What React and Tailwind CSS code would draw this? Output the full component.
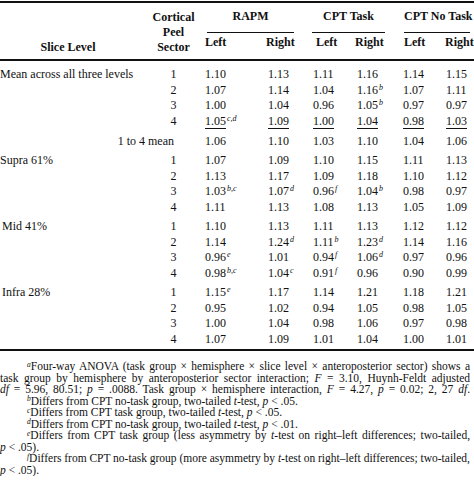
const COLS = "grid grid-cols-[146px_59px_63px_45px_44px_46px_43px_28px]";

const groups = [
  {
    label: "Mean across all three levels",
    rows: [
      ["1", "1.10", "1.13", "1.11", "1.16", "1.14", "1.15"],
      ["2", "1.07", "1.14", "1.04", "1.16^b", "1.07", "1.11"],
      ["3", "1.00", "1.04", "0.96", "1.05^b", "0.97", "0.97"],
      ["4", "1.05^c,d", "1.09", "1.00", "1.04", "0.98", "1.03"],
    ],
    underlineLast: true,
  },
  {
    label: "Supra 61%",
    rows: [
      ["1", "1.07", "1.09", "1.10", "1.15", "1.11", "1.13"],
      ["2", "1.13", "1.17", "1.09", "1.18", "1.10", "1.12"],
      ["3", "1.03^b,c", "1.07^d", "0.96^f", "1.04^b", "0.98", "0.97"],
      ["4", "1.11", "1.13", "1.08", "1.13", "1.05", "1.09"],
    ],
  },
  {
    label: "Mid 41%",
    rows: [
      ["1", "1.10", "1.13", "1.11", "1.13", "1.12", "1.12"],
      ["2", "1.14", "1.24^d", "1.11^b", "1.23^d", "1.14", "1.16"],
      ["3", "0.96^e", "1.01", "0.94^f", "1.06^d", "0.97", "0.96"],
      ["4", "0.98^b,c", "1.04^c", "0.91^f", "0.96", "0.90", "0.99"],
    ],
  },
  {
    label: "Infra 28%",
    rows: [
      ["1", "1.15^e", "1.17", "1.14", "1.21", "1.18", "1.21"],
      ["2", "0.95", "1.02", "0.94", "1.05", "0.98", "1.05"],
      ["3", "1.00", "1.04", "0.98", "1.06", "0.97", "0.98"],
      ["4", "1.07", "1.09", "1.01", "1.04", "1.00", "1.01"],
    ],
  },
];

const Cell = ({ value, underline }) => {
  const [num, sup] = value.split("^");
  return (
    <div className="whitespace-nowrap">
      <span
        className={
          underline
            ? "inline-block leading-[12px] pb-[1.5px] border-b-[1.5px] border-[#111]"
            : ""
        }
      >
        {num}
      </span>
      {sup && <sup className="text-[8px] italic ml-[1px]">{sup}</sup>}
    </div>
  );
};

const Row = ({ label, cells, underline, labelClass = "" }) => (
  <div className={`${COLS} h-[15.5px] leading-[15.5px]`}>
    <div className={`whitespace-nowrap ${labelClass}`}>{label}</div>
    <div className="text-center pr-[4px]">{cells[0]}</div>
    {cells.slice(1).map((v, i) => (
      <Cell key={i} value={v} underline={underline} />
    ))}
  </div>
);

const Sup = ({ children }) => (
  <sup className="text-[7.5px] italic">{children}</sup>
);

// justified footnote line (one line only)
const J = "text-justify [text-align-last:justify] [word-spacing:-0.5px]";

const App = () => {
  return (
    <div className="w-[474px] bg-white text-[#111] font-['Liberation_Serif',serif] text-[12px] overflow-hidden">
      <div className="pt-[1px]">
        <div className="border-t-2 border-[#111]" />
      </div>

      {/* header */}
      <div className={`${COLS} grid-rows-[30px_26px] font-bold leading-[15px]`}>
        <div className="row-span-2 self-end pb-[4.5px] text-center pr-[10px]">
          Slice Level
        </div>
        <div className="row-span-2 self-end pb-[4.5px] text-center pr-[4px]">
          <div>Cortical</div>
          <div>Peel</div>
          <div>Sector</div>
        </div>
        <div className="col-span-2 self-end ml-[2px] mr-[19px] pb-[8.5px] border-b border-[#111] text-center">
          RAPM
        </div>
        <div className="col-span-2 self-end -ml-[1px] mr-[18px] pb-[8.5px] border-b border-[#111] text-center">
          CPT Task
        </div>
        <div className="col-span-2 self-end ml-[1px] mr-[4px] pb-[8.5px] border-b border-[#111] text-center whitespace-nowrap">
          CPT No Task
        </div>
        <div className="pt-[2px]">Left</div>
        <div className="pt-[2px] -ml-[2px]">Right</div>
        <div className="pt-[2px] ml-[3px]">Left</div>
        <div className="pt-[2px] -ml-[2px]">Right</div>
        <div className="pt-[2px] ml-[1px]">Left</div>
        <div className="pt-[2px] -ml-[1px]">Right</div>
      </div>
      <div className="border-t-2 border-[#111]" />

      {/* body */}
      <div className="pt-[6.25px]">
        {groups.map((g, gi) => (
          <div key={gi} className={gi === 0 ? "" : gi === 1 ? "pt-[3.5px]" : "pt-[4px]"}>
            {g.rows.map((r, ri) => (
              <Row
                key={ri}
                label={ri === 0 ? g.label : ""}
                labelClass={gi >= 2 ? "pl-[2px]" : ""}
                cells={r}
                underline={g.underlineLast && ri === g.rows.length - 1}
              />
            ))}
            {gi === 0 && (
              <div className={`${COLS} h-[15.5px] leading-[15.5px] mt-[5px]`}>
                <div className="col-span-2 text-right pr-[31px]">1 to 4 mean</div>
                {["1.06", "1.10", "1.03", "1.10", "1.04", "1.06"].map((v, i) => (
                  <Cell key={i} value={v} />
                ))}
              </div>
            )}
          </div>
        ))}
      </div>
      <div className="mt-[2px] border-t-2 border-[#111]" />

      {/* footnotes */}
      <div className="pt-[10px] pr-[4px] text-[11.5px] leading-[11.5px]">
        <div className={`pl-[27px] ${J}`}>
          <Sup>a</Sup>Four-way ANOVA (task group × hemisphere × slice level ×
          anteroposterior sector) shows a
        </div>
        <div className={J}>
          task group by hemisphere by anteroposterior sector interaction;{" "}
          <i>F</i> = 3.10, Huynh-Feldt adjusted
        </div>
        <div className={J}>
          <i>df</i> = 5.96, 80.51; <i>p</i> = .0088. Task group × hemisphere
          interaction, <i>F</i> = 4.27, <i>p</i> = 0.02; 2, 27 <i>df</i>.
        </div>
        <div className="pl-[27px]">
          <Sup>b</Sup>Differs from CPT no-task group, two-tailed <i>t</i>-test,{" "}
          <i>p</i> &lt; .05.
        </div>
        <div className="pl-[27px]">
          <Sup>c</Sup>Differs from CPT task group, two-tailed <i>t</i>-test,{" "}
          <i>p</i> &lt; .05.
        </div>
        <div className="pl-[27px]">
          <Sup>d</Sup>Differs from CPT no-task group, two-tailed <i>t</i>-test,{" "}
          <i>p</i> &lt; .01.
        </div>
        <div className={`pl-[27px] ${J}`}>
          <Sup>e</Sup>Differs from CPT task group (less asymmetry by <i>t</i>-test
          on right–left differences; two-tailed,
        </div>
        <div>
          <i>p</i> &lt; .05).
        </div>
        <div className={`pl-[27px] ${J}`}>
          <Sup>f</Sup>Differs from CPT no-task group (more asymmetry by{" "}
          <i>t</i>-test on right–left differences; two-tailed,
        </div>
        <div>
          <i>p</i> &lt; .05).
        </div>
      </div>
    </div>
  );
};

export default App;
